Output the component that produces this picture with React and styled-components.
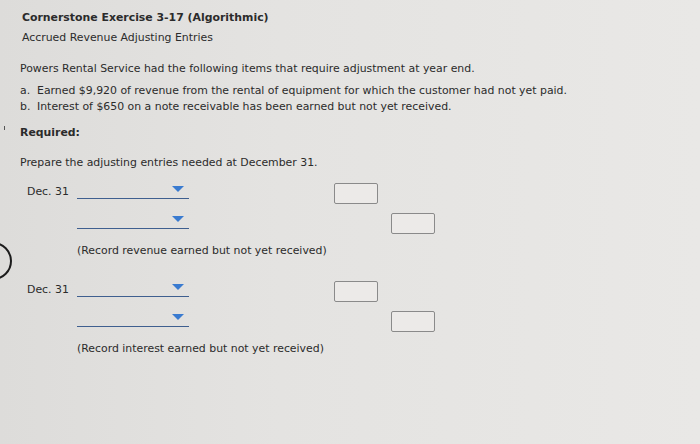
import React from "react";
import styled, { createGlobalStyle } from "styled-components";

const COLORS = {
  page: "#e4e3e1",
  text: "#2b2b2b",
  line: "#3f5f8f",
  arrow: "#3a7bd0",
  box: "#8a8a8a",
};

const GlobalStyle = createGlobalStyle`
  html, body {
    margin: 0;
    padding: 0;
  }
  body {
    width: 700px;
    height: 444px;
    overflow: hidden;
    background: linear-gradient(90deg, #dddcda 0%, #e4e3e1 40%, #e9e8e6 100%);
    font-family: "DejaVu Sans", Verdana, sans-serif;
    color: ${COLORS.text};
  }
`;

const Page = styled.div`
  position: relative;
  height: 444px;
  padding: 11px 0 0 20px;
  box-sizing: border-box;
  font-size: 10.9px;
  line-height: 14px;
`;

const Header = styled.div`
  padding-left: 2px;
  margin-bottom: 17px;
`;

const Title = styled.div`
  font-weight: bold;
  font-size: 10.9px;
  line-height: 14px;
  margin-bottom: 6px;
`;

const Para = styled.p`
  margin: 0 0 ${(p) => p.$after || 0}px 0;
`;

const List = styled.ol`
  list-style: none;
  margin: 0 0 12px 0;
  padding: 0;
  display: flex;
  flex-direction: column;
  gap: 2px;
`;

const Item = styled.li`
  display: flex;
  gap: 5px;
`;

const Marker = styled.span`
  width: 12px;
`;

const Required = styled.div`
  font-weight: bold;
  margin-bottom: 16px;
`;

const Entries = styled.div`
  padding: 11px 0 0 7px;
  display: flex;
  flex-direction: column;
  gap: 21px;
`;

const Entry = styled.div`
  display: flex;
  flex-direction: column;
`;

const Row = styled.div`
  display: grid;
  grid-template-columns: 50px 112px 145px 44px 13px 44px;
  height: 30px;
  align-items: start;
`;

const DateLabel = styled.span`
  margin-top: 4px;
`;

const Select = styled.div`
  position: relative;
  margin-top: 2px;
  height: 15px;
  border-bottom: 1.5px solid ${COLORS.line};
`;

const Arrow = styled.span`
  position: absolute;
  right: 5px;
  top: 3px;
  width: 0;
  height: 0;
  border-left: 6px solid transparent;
  border-right: 6px solid transparent;
  border-top: 6px solid ${COLORS.arrow};
`;

const AmountBox = styled.div`
  grid-column: ${(p) => p.$col};
  margin-top: 2px;
  height: 21px;
  box-sizing: border-box;
  border: 1.5px solid ${COLORS.box};
  border-radius: 2px;
  background: #eceae8;
`;

const Note = styled.div`
  margin: 3px 0 0 50px;
`;

const Tick = styled.span`
  position: absolute;
  left: 4px;
  top: 126px;
  width: 1px;
  height: 4px;
  background: #555;
`;

const Arc = styled.span`
  position: absolute;
  left: -26px;
  top: 242px;
  width: 34px;
  height: 34px;
  border: 2px solid #1c1c1c;
  border-radius: 50%;
`;

function EntryBlock({ note }) {
  return (
    <Entry>
      <Row>
        <DateLabel>Dec. 31</DateLabel>
        <Select>
          <Arrow />
        </Select>
        <AmountBox $col={4} />
      </Row>
      <Row>
        <span />
        <Select>
          <Arrow />
        </Select>
        <AmountBox $col={6} />
      </Row>
      <Note>{note}</Note>
    </Entry>
  );
}

export default function App() {
  return (
    <>
      <GlobalStyle />
      <Page>
        <Header>
          <Title>Cornerstone Exercise 3-17 (Algorithmic)</Title>
          <div>Accrued Revenue Adjusting Entries</div>
        </Header>
        <Para $after={8}>
          Powers Rental Service had the following items that require adjustment at year end.
        </Para>
        <List>
          <Item>
            <Marker>a.</Marker>
            <span>
              Earned $9,920 of revenue from the rental of equipment for which the customer had not yet paid.
            </span>
          </Item>
          <Item>
            <Marker>b.</Marker>
            <span>Interest of $650 on a note receivable has been earned but not yet received.</span>
          </Item>
        </List>
        <Required>Required:</Required>
        <Para>Prepare the adjusting entries needed at December 31.</Para>
        <Entries>
          <EntryBlock note="(Record revenue earned but not yet received)" />
          <EntryBlock note="(Record interest earned but not yet received)" />
        </Entries>
        <Tick />
        <Arc />
      </Page>
    </>
  );
}
